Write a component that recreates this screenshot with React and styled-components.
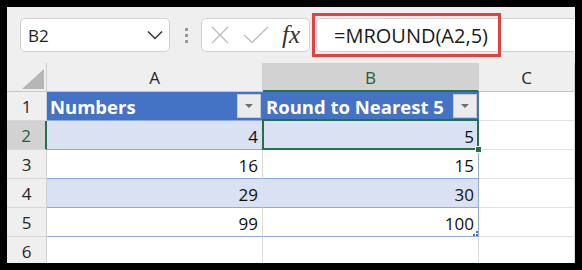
import React from "react";
import styled, { createGlobalStyle, css } from "styled-components";

const Global = createGlobalStyle`
  html, body { margin: 0; padding: 0; background: #000; }
  * { box-sizing: border-box; }
`;

const UI = `"Open Sans", "Noto Sans", "Liberation Sans", sans-serif`;

const Frame = styled.div`
  width: 582px;
  height: 270px;
  padding: 7px;
  background: #000;
`;

const Window = styled.div`
  width: 568px;
  height: 256px;
  overflow: hidden;
  background: #efefef;
  display: flex;
  flex-direction: column;
  font-family: ${UI};
`;

const FormulaBar = styled.div`
  height: 56px;
  flex: none;
  display: flex;
  align-items: center;
  padding-left: 13px;
`;

const NameBox = styled.div`
  width: 150px;
  height: 34px;
  background: #fff;
  border: 1px solid #d0d0d0;
  border-radius: 5px;
  display: flex;
  align-items: center;
  justify-content: space-between;
  padding: 0 6px 0 7px;
  font-size: 17px;
  color: #222;
`;

const Grip = styled.div`
  display: flex;
  flex-direction: column;
  gap: 3px;
  margin: 0 13px 0 15px;
`;

const Dot = styled.span`
  width: 3px;
  height: 3px;
  background: #9a9a9a;
`;

const FxGroup = styled.div`
  width: 109px;
  height: 34px;
  background: #fff;
  border: 1px solid #d0d0d0;
  border-radius: 5px;
  display: flex;
  align-items: center;
  padding-left: 9px;
`;

const FxLabel = styled.span`
  font-family: "Liberation Serif", "DejaVu Serif", serif;
  font-style: italic;
  font-size: 25px;
  color: #333;
  margin-left: 13px;
  line-height: 1;
  margin-top: -2px;
`;

const FormulaInput = styled.div`
  position: relative;
  flex: 1;
  height: 34px;
  margin-left: 6px;
  margin-right: -8px;
  background: #fff;
  border: 1px solid #d0d0d0;
  border-radius: 5px;
  display: flex;
  align-items: center;
  padding-left: 17px;
  font-size: 20px;
  color: #1a1a1a;
`;

const Highlight = styled.span`
  position: absolute;
  left: -5px;
  top: -6px;
  width: 189px;
  height: 44px;
  border: 3px solid #e5403f;
  pointer-events: none;
`;

const Sheet = styled.div`
  flex: 1;
  display: grid;
  grid-template-columns: 40px 216px 216px 1fr;
  grid-auto-rows: 29px;
  background: #fff;
  font-size: 17px;
`;

const headerBase = css`
  background: ${(p) => (p.$selected ? "#d2d2d2" : "#efefef")};
  color: ${(p) => (p.$selected ? "#1d5f3a" : "#262626")};
  display: flex;
  align-items: center;
  justify-content: center;
`;

const Corner = styled.div`
  ${headerBase};
  align-items: flex-end;
  justify-content: flex-end;
  padding: 0 2px 2px 0;
  border-right: 1px solid #cfcfcf;
  border-bottom: 1px solid #c6c6c6;
`;

const ColHeader = styled.div`
  ${headerBase};
  border-right: 1px solid #cfcfcf;
  border-bottom: ${(p) => (p.$selected ? "2px solid #217346" : "1px solid #c6c6c6")};
  padding-top: ${(p) => (p.$selected ? "1px" : "0")};
`;

const RowHeader = styled.div`
  ${headerBase};
  border-bottom: 1px solid #d8d8d8;
  border-right: ${(p) => (p.$selected ? "2px solid #217346" : "1px solid #cfcfcf")};
`;

const TableHead = styled.div`
  background: #4472c4;
  color: #fff;
  font-weight: 700;
  font-size: 18.5px;
  display: flex;
  align-items: center;
  justify-content: space-between;
  padding: 0 1px 0 3px;
  border-bottom: 1px solid #8ea9db;
  border-right: 1px solid #4472c4;
`;

const FilterButton = styled.span`
  width: 24px;
  height: 24px;
  background: #ebebeb;
  border: 1px solid #c9c9c9;
  display: flex;
  align-items: center;
  justify-content: center;
  &::after {
    content: "";
    border-left: 4px solid transparent;
    border-right: 4px solid transparent;
    border-top: 4px solid #6d6d6d;
  }
`;

const DataCell = styled.div`
  position: relative;
  background: ${(p) => (p.$band ? "#d9e1f2" : "#fff")};
  display: flex;
  align-items: center;
  justify-content: flex-end;
  padding: 3px 4px 0 0;
  color: #111;
  border-bottom: 1px solid #8ea9db;
  border-right: 1px solid ${(p) => (p.$edge ? "#8ea9db" : p.$band ? "#d9e1f2" : "#dadada")};
  ${(p) =>
    p.$selected &&
    css`
      &::after {
        content: "";
        position: absolute;
        left: -1px;
        top: -2px;
        right: -1px;
        bottom: -1px;
        border: 2px solid #217346;
        pointer-events: none;
      }
    `}
`;

const FillHandle = styled.span`
  position: absolute;
  right: -4px;
  bottom: -4px;
  width: 7px;
  height: 7px;
  background: #217346;
  border: 1px solid #fff;
  z-index: 2;
`;

const ResizeMark = styled.svg`
  position: absolute;
  right: 0;
  bottom: 0;
`;

const EmptyCell = styled.div`
  background: #fff;
  border-bottom: 1px solid #e1e1e1;
  border-right: 1px solid #dadada;
`;

const rows = [
  [4, 5],
  [16, 15],
  [29, 30],
  [99, 100],
];

export default function App() {
  return (
    <>
      <Global />
      <Frame>
        <Window>
          <FormulaBar>
            <NameBox>
              <span>B2</span>
              <svg width="16" height="10" viewBox="0 0 16 10">
                <polyline points="1,1.5 8,8.5 15,1.5" fill="none" stroke="#333" strokeWidth="1.5" />
              </svg>
            </NameBox>
            <Grip>
              <Dot />
              <Dot />
              <Dot />
            </Grip>
            <FxGroup>
              <svg width="18" height="18" viewBox="0 0 18 18">
                <path d="M1 1 L17 17 M17 1 L1 17" stroke="#bdbdbd" strokeWidth="1.4" fill="none" />
              </svg>
              <svg width="26" height="18" viewBox="0 0 26 18" style={{ marginLeft: 14 }}>
                <polyline points="1,9 9,16.5 25,1" stroke="#bdbdbd" strokeWidth="1.4" fill="none" />
              </svg>
              <FxLabel>fx</FxLabel>
            </FxGroup>
            <FormulaInput>
              =MROUND(A2,5)
              <Highlight />
            </FormulaInput>
          </FormulaBar>
          <Sheet>
            <Corner>
              <svg width="22" height="20" viewBox="0 0 22 20">
                <polygon points="22,0 22,20 0,20" fill="#b6b6b6" />
              </svg>
            </Corner>
            <ColHeader>A</ColHeader>
            <ColHeader $selected>B</ColHeader>
            <ColHeader>C</ColHeader>

            <RowHeader>1</RowHeader>
            <TableHead>
              Numbers
              <FilterButton />
            </TableHead>
            <TableHead>
              Round to Nearest 5
              <FilterButton />
            </TableHead>
            <EmptyCell />

            {rows.map(([a, b], i) => {
              const band = i % 2 === 0;
              const selected = i === 0;
              const last = i === rows.length - 1;
              return (
                <React.Fragment key={i}>
                  <RowHeader $selected={selected}>{i + 2}</RowHeader>
                  <DataCell $band={band}>{a}</DataCell>
                  <DataCell $band={band} $edge $selected={selected}>
                    {b}
                    {selected && <FillHandle />}
                    {last && (
                      <ResizeMark width="5" height="5" viewBox="0 0 5 5">
                        <rect x="3" y="0" width="2" height="2" fill="#4472c4" />
                        <rect x="0" y="3" width="2" height="2" fill="#4472c4" />
                        <rect x="3" y="3" width="2" height="2" fill="#4472c4" />
                      </ResizeMark>
                    )}
                  </DataCell>
                  <EmptyCell />
                </React.Fragment>
              );
            })}

            <RowHeader>6</RowHeader>
            <EmptyCell />
            <EmptyCell />
            <EmptyCell />
          </Sheet>
        </Window>
      </Frame>
    </>
  );
}
